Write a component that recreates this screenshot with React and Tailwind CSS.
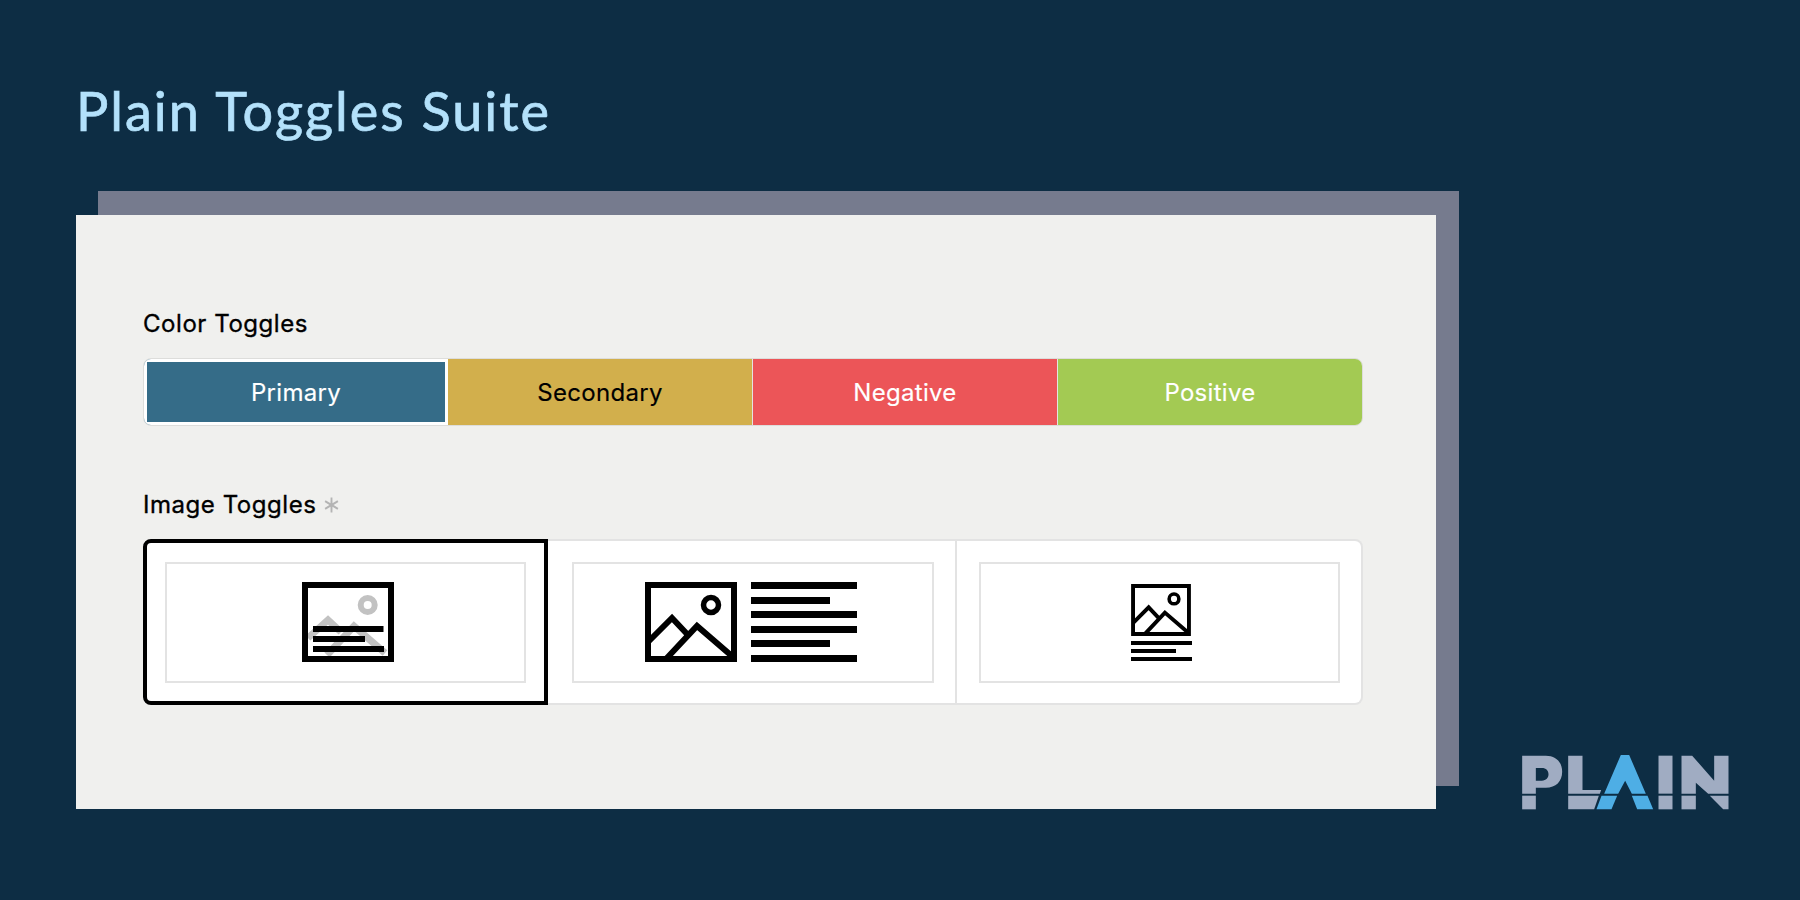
const lato = { fontFamily: '"Lato", "Open Sans", sans-serif' };

function ColorToggle({ label, className }) {
  return (
    <div className={`flex items-center justify-center pt-[2px] text-[24px] leading-none tracking-[0.3px] [-webkit-text-stroke:0.15px_currentColor] ${className}`}>
      {label}
    </div>
  );
}

function HeroFrame() {
  return (
    <svg width="92" height="80" viewBox="0 0 92 80" className="block">
      <circle cx="65.7" cy="23" r="7" fill="none" stroke="#c2c2c2" strokeWidth="6" />
      <path d="M6 56L26 38L39 50M25 73L52 44L83 71" fill="none" stroke="#c2c2c2" strokeWidth="7" />
      <path d="M3 3H89V77H3Z" fill="none" stroke="#000" strokeWidth="6" />
      <rect x="11" y="44" width="70.5" height="6" fill="#000" />
      <rect x="11" y="54" width="52" height="6" fill="#000" />
      <rect x="11" y="64" width="71" height="6" fill="#000" />
    </svg>
  );
}

function Picture({ width, height }) {
  return (
    <svg width={width} height={height} viewBox="0 0 92 80" className="block">
      <path d="M3 3H89V77H3Z" fill="none" stroke="#000" strokeWidth="6" />
      <circle cx="66" cy="23" r="7.5" fill="none" stroke="#000" strokeWidth="5.5" />
      <path d="M4 59L27 36L43 53M21 77L52 44L88 75" fill="none" stroke="#000" strokeWidth="6" />
    </svg>
  );
}

function Lines({ gap, h, rows, long, short }) {
  return (
    <div className="flex flex-col" style={{ gap }}>
      {rows.map((isShort, i) => (
        <div key={i} className="bg-black" style={{ height: h, width: isShort ? short : long }} />
      ))}
    </div>
  );
}

function Star() {
  return (
    <svg width="15" height="16" viewBox="0 0 15 16" className="block">
      <path
        d="M6.6 0.5H8.4L8.5 6.2L13.4 3.2L14.4 4.9L9.6 8L14.4 11.1L13.4 12.8L8.5 9.8L8.4 15.5H6.6L6.5 9.8L1.6 12.8L0.6 11.1L5.4 8L0.6 4.9L1.6 3.2L6.5 6.2Z"
        fill="#b4b4b4"
      />
    </svg>
  );
}

function Logo() {
  return (
    <svg width="207" height="55" viewBox="67 45 620 165" className="block">
      <g fill="#a0acc2">
        <path fillRule="evenodd" d="M67 47H138C168 47 187 66 187 95C187 124 168 143 138 143H108V161H67ZM108 84V122H126C139 122 146 114 146 103C146 92 139 84 126 84Z" />
        <path d="M67 167H108V208H67Z" />
        <path d="M205 47H248V150H304L300 161H205Z" />
        <path d="M205 167H297L283 208H205Z" />
        <path d="M476 47H518V161H476Z" />
        <path d="M476 167H518V208H476Z" />
        <path d="M545 47H577L643 122V47H686V161H625L588 128V161H545Z" />
        <path d="M545 167H588V208H545Z" />
        <path d="M630 167H686V208H670Z" />
      </g>
      <g fill="#4eaee5">
        <path d="M363 45H388L438 161H396L376 122L355 161H313Z" />
        <path d="M305 167H352L335 208H290Z" />
        <path d="M396 167H443L460 208H412Z" />
      </g>
    </svg>
  );
}

export default function App() {
  const inter = { fontFamily: '"Inter", "Liberation Sans", sans-serif' };
  return (
    <div className="relative w-[1800px] h-[900px] bg-[#0d2d44] overflow-hidden flex flex-col">
      <h1
        className="pl-[76px] pt-[76px] h-[215px] text-[54px] leading-[70px] font-normal tracking-[2px] [-webkit-text-stroke:0.7px_#b3e1fb] text-[#b3e1fb]"
        style={lato}
      >
        Plain Toggles Suite
      </h1>

      <div className="relative ml-[76px] w-[1360px] h-[594px]">
        <div className="absolute left-[22px] top-[-24px] w-[1361px] h-[595px] bg-[#767b8e]" />
        <div className="relative h-full bg-[#f0f0ee] pl-[67px] pr-[73px] pt-[94px]" style={inter}>
          <div className="text-[24px] leading-[30px] font-normal [-webkit-text-stroke:0.35px_#000] tracking-[0.55px] text-black h-[49px]">Color Toggles</div>
          <div className="grid grid-cols-[304px_305px_305px_1fr] h-[68px] rounded-[8px] overflow-hidden border border-[#dddddb] text-white">
            <ColorToggle label="Primary" className="bg-[#356c88] border-[3px] border-white" />
            <ColorToggle label="Secondary" className="bg-[#d2af4c] text-black border-r border-[#e4e4e2]" />
            <ColorToggle label="Negative" className="bg-[#ec5558] border-r border-[#e4e4e2]" />
            <ColorToggle label="Positive" className="bg-[#a3ca53]" />
          </div>

          <div className="mt-[64px] h-[50px] flex items-start gap-[8px] text-[24px] leading-[30px] font-normal [-webkit-text-stroke:0.35px_#000] tracking-[0.55px] text-black">
            <span>Image Toggles</span>
            <span className="pt-[7px]"><Star /></span>
          </div>
          <div className="grid grid-cols-[405px_409px_406px] h-[166px] -mt-[1px]">
            <div className="bg-white border-[4px] border-black rounded-l-[8px] pl-[18px] pr-[18px] pt-[19px] pb-[18px]">
              <div className="h-full border-2 border-[#e3e3e3] flex items-center justify-center pl-[5px] pb-[1px]">
                <HeroFrame />
              </div>
            </div>
            <div className="bg-white border-y-2 border-r-2 border-[#e3e3e3] pl-[24px] pr-[21px] pt-[21px] pb-[20px]">
              <div className="h-full border-2 border-[#e3e3e3] flex items-center justify-center gap-[14px] pr-[4px] pb-[1px]">
                <Picture width={92} height={80} />
                <Lines gap="7.6px" h={7} long={106} short={79} rows={[false, true, false, false, true, false]} />
              </div>
            </div>
            <div className="bg-white border-y-2 border-r-2 border-[#e3e3e3] rounded-r-[8px] pl-[22px] pr-[21px] pt-[21px] pb-[20px]">
              <div className="h-full border-2 border-[#e3e3e3] flex flex-col items-center justify-center gap-[5px] pl-[3px]">
                <Picture width={60} height={52} />
                <Lines gap="4.2px" h={4} long={61} short={45} rows={[false, true, false]} />
              </div>
            </div>
          </div>
        </div>
      </div>

      <div className="absolute right-[71px] top-[755px]">
        <Logo />
      </div>
    </div>
  );
}
